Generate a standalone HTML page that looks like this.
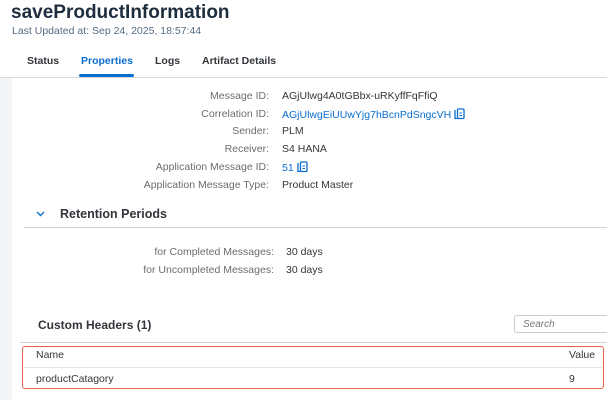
<!DOCTYPE html><html><head><style>
body{margin:0;width:607px;height:400px;overflow:hidden;font-family:"Liberation Sans",sans-serif;background:#fff;position:relative;color:#32363a}
.a{position:absolute;white-space:nowrap}
.l{font-size:10.5px;color:#6a6d70;text-align:right;width:260px;left:9px}
.v{font-size:10.5px;left:282px}
.ic{display:inline-block;vertical-align:-2px;margin-left:3px}
</style></head><body>
<div class="a" style="left:11px;top:2px;font-size:19px;font-weight:bold;color:#1d2d3e">saveProductInformation</div>
<div class="a" style="left:12px;top:25px;font-size:10.5px;color:#556b82">Last Updated at: Sep 24, 2025, 18:57:44</div>
<div class="a" style="left:27px;top:55px;font-size:10.5px;font-weight:bold">Status</div>
<div class="a" style="left:81px;top:55px;font-size:10.5px;font-weight:bold;color:#0a6ed1">Properties</div>
<div class="a" style="left:79px;top:74px;width:55px;height:3px;background:#0a6ed1;border-radius:2px"></div>
<div class="a" style="left:155px;top:55px;font-size:10.5px;font-weight:bold">Logs</div>
<div class="a" style="left:202px;top:55px;font-size:10.5px;font-weight:bold">Artifact Details</div>
<div class="a" style="left:0;top:77px;width:607px;height:1px;background:#d9d9d9"></div>
<div class="a" style="left:0;top:78px;width:12px;height:322px;background:#f4f5f6"></div>
<div class="a l" style="top:90px">Message ID:</div><div class="a v" style="top:90px">AGjUlwg4A0tGBbx-uRKyffFqFfiQ</div>
<div class="a l" style="top:108px">Correlation ID:</div><div class="a v" style="top:108px;color:#0a6ed1">AGjUlwgEiUUwYjg7hBcnPdSngcVH<svg class="ic" width="11" height="12" viewBox="0 0 11 12"><path d="M1 2v8.5h2" fill="none" stroke="#0a6ed1" stroke-width="1.3"/><rect x="3.5" y="1" width="6.5" height="9.5" rx="1" fill="none" stroke="#0a6ed1" stroke-width="1.3"/><path d="M5.5 5h2.5M5.5 7.5h2.5" stroke="#0a6ed1"/></svg></div>
<div class="a l" style="top:125px">Sender:</div><div class="a v" style="top:125px">PLM</div>
<div class="a l" style="top:143px">Receiver:</div><div class="a v" style="top:143px">S4 HANA</div>
<div class="a l" style="top:161px">Application Message ID:</div><div class="a v" style="top:161px;color:#0a6ed1">51<svg class="ic" width="11" height="12" viewBox="0 0 11 12"><path d="M1 2v8.5h2" fill="none" stroke="#0a6ed1" stroke-width="1.3"/><rect x="3.5" y="1" width="6.5" height="9.5" rx="1" fill="none" stroke="#0a6ed1" stroke-width="1.3"/><path d="M5.5 5h2.5M5.5 7.5h2.5" stroke="#0a6ed1"/></svg></div>
<div class="a l" style="top:179px">Application Message Type:</div><div class="a v" style="top:179px">Product Master</div>
<svg class="a" style="left:36px;top:211px" width="9" height="6" viewBox="0 0 9 6"><path d="M1 1l3.5 3.5L8 1" fill="none" stroke="#0a6ed1" stroke-width="1.4"/></svg>
<div class="a" style="left:60px;top:207px;font-size:12.5px;font-weight:bold">Retention Periods</div>
<div class="a" style="left:24px;top:227px;width:583px;height:1px;background:#d0d0d0"></div>
<div class="a l" style="top:246px;left:14px">for Completed Messages:</div><div class="a v" style="top:246px;left:286px">30 days</div>
<div class="a l" style="top:264px;left:14px">for Uncompleted Messages:</div><div class="a v" style="top:264px;left:286px">30 days</div>
<div class="a" style="left:38px;top:318px;font-size:12px;font-weight:bold">Custom Headers (1)</div>
<div class="a" style="left:514px;top:315px;width:95px;height:18px;border:1px solid #ccc;border-radius:3px;box-sizing:border-box;font-size:10px;font-style:italic;color:#777;padding:3px 8px">Search</div>
<div class="a" style="left:20px;top:342px;width:587px;height:1px;background:#d0d0d0"></div>
<div class="a" style="left:22px;top:346px;width:582px;height:43px;border:1.5px solid #e8604c;border-radius:3px;box-sizing:border-box"></div>
<div class="a" style="left:24px;top:367px;width:578px;height:1px;background:#e5e5e5"></div>
<div class="a" style="left:36px;top:349px;font-size:10.5px">Name</div>
<div class="a" style="left:569px;top:349px;font-size:10.5px">Value</div>
<div class="a" style="left:36px;top:373px;font-size:10.5px">productCatagory</div>
<div class="a" style="left:569px;top:373px;font-size:10.5px">9</div>
</body></html>
